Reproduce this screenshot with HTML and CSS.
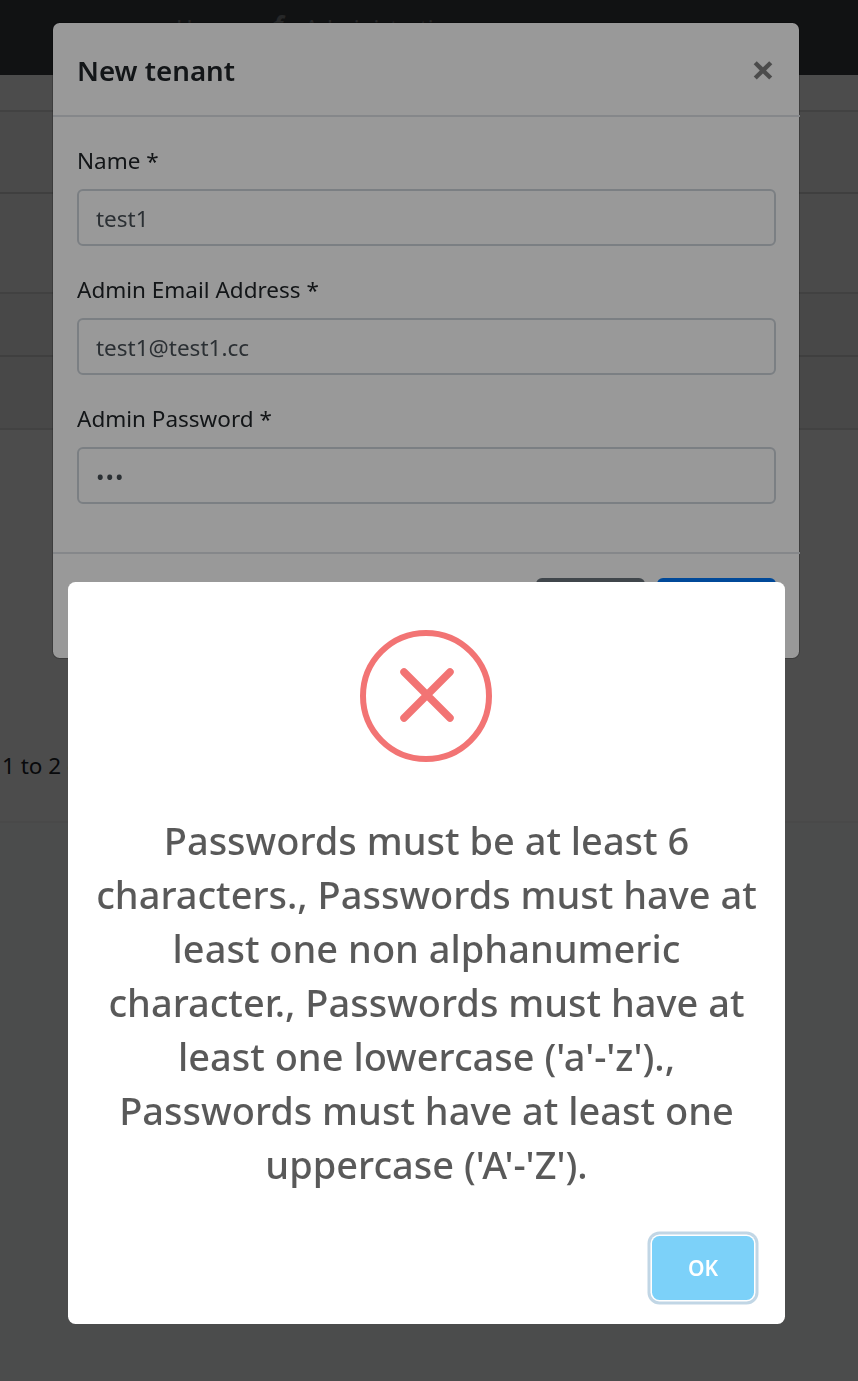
FILE: index.html
```html
<!DOCTYPE html>
<html lang="en">
<head>
<meta charset="utf-8">
<title>Tenants</title>
<link rel="stylesheet" href="styles.css">
</head>
<body>
<div class="page">
  <nav class="navbar"><span class="nav-link">Home</span><span class="nav-icon">f</span><span class="nav-link">Administration</span></nav>
  <main class="content">
    <div class="row row-a"></div>
    <div class="row row-b"></div>
    <div class="row row-c"></div>
    <div class="row row-d"></div>
    <div class="row row-e"></div>
    <div class="pager">1 to 2 of 2</div>
  </main>
</div>
<div class="backdrop"></div>
<div class="modal-layer">
  <section class="modal">
    <header class="modal-header"><h5 class="modal-title">New tenant</h5><span class="close">×</span></header>
    <div class="modal-body">
      <div class="form-group"><label class="label">Name *</label><input class="input" type="text" value="test1"></div>
      <div class="form-group"><label class="label">Admin Email Address *</label><input class="input" type="text" value="test1@test1.cc"></div>
      <div class="form-group"><label class="label">Admin Password *</label><input class="input input-password" type="password" value="abc"></div>
    </div>
    <footer class="modal-footer"><button class="btn btn-cancel">Cancel</button><button class="btn btn-save">Save</button></footer>
  </section>
</div>
<div class="swal-overlay">
  <div class="swal-modal">
    <svg class="swal-icon" viewBox="0 0 132 132" width="132" height="132" aria-hidden="true">
      <circle cx="66" cy="66" r="63" fill="none" stroke="#f27474" stroke-width="6"/>
      <path d="M44 42 L90 88 M90 42 L44 88" fill="none" stroke="#f27474" stroke-width="7.5" stroke-linecap="round"/>
    </svg>
    <div class="swal-text">Passwords must be at least 6 characters., Passwords must have at least one non alphanumeric character., Passwords must have at least one lowercase ('a'-'z')., Passwords must have at least one uppercase ('A'-'Z').</div>
    <div class="swal-footer"><button class="swal-button">OK</button></div>
  </div>
</div>
</body>
</html>
```
FILE: styles.css
```css
* { box-sizing: border-box; }
html, body { margin: 0; height: 100%; overflow: hidden; }
body { background: #fdfffe; font-family: "Noto Sans", "Open Sans", sans-serif; font-size: 22.5px; line-height: 36px; color: #212529; }
.page { display: flex; flex-direction: column; }
.navbar { height: 75px; background: #3a3c42; color: #808286; display: flex; padding: 10px 0 0 176px; }
.nav-icon { font-style: italic; font-weight: 700; font-size: 28px; margin: -2px 22px 0 32px; }
.content { height: 748px; display: flex; flex-direction: column; background: #fff; border-bottom: 2px solid #f4f4f4; }
.row { border-bottom: 2px solid #e6e6e6; }
.row-a { height: 37px; background: #fefefe; border-bottom-color: #dcdcdc; }
.row-b { height: 82px; background: #f8f8f8; border-bottom-color: #d4d4d4; }
.row-c { height: 100px; background: #f9f9f9; border-bottom-color: #dadada; }
.row-d { height: 63px; background: #f2f2f2; border-bottom-color: #d4d4d4; }
.row-e { height: 73px; background: #f0f0f0; border-bottom-color: #dcdcdc; }
.pager { margin-top: 318px; padding-left: 2px; }
.backdrop { position: fixed; inset: 0; background: rgba(0,0,0,.5); }
.modal-layer { position: fixed; inset: 0; padding: 22px 0 0 52px; }
.modal { width: 748px; background: #fff; background-clip: padding-box; border: 1.5px solid rgba(0,0,0,.2); border-radius: 7.5px; display: flex; flex-direction: column; }
.modal-header { height: 93.5px; padding: 25px 24px 24px; display: flex; justify-content: space-between; align-items: flex-start; border-bottom: 2px solid #dee2e6; margin-right: -1px; }
.modal-title { margin: 0; font-size: 27.7px; line-height: 45px; font-weight: 600; }
.close { font-size: 42px; line-height: 45px; font-weight: 700; color: #000; opacity: .5; margin: -2px 1px 0 0; }
.modal-body { padding: 24px 24px 0; height: 437px; border-bottom: 2px solid #dee2e6; margin-right: -1px; }
.form-group { margin-bottom: 24px; }
.label { display: block; margin-bottom: 12px; padding-top: 2px; line-height: 36px; height: 36px; }
.input { display: block; width: 100%; height: 57px; padding: 11px 17px 9px; border: 2px solid #ced4da; border-radius: 6px; background: #fff; color: #495057; font: inherit; }
.input-password { letter-spacing: 1px; }
.modal-footer { padding: 24px 23.5px 23px 24px; display: flex; justify-content: flex-end; gap: 12px; }
.btn { height: 57px; border: 0; border-radius: 6px; color: #fff; font: inherit; }
.btn-cancel { width: 109px; background: #6c757d; }
.btn-save { width: 119px; background: #007bff; }
.swal-overlay { position: fixed; inset: 0; background: rgba(0,0,0,.4); padding: 582px 0 0 68px; }
.swal-modal { width: 717px; height: 742px; background: #fff; border-radius: 7.5px; display: flex; flex-direction: column; align-items: center; padding-top: 48px; }
.swal-icon { display: block; flex: none; margin-right: 1px; }
.swal-text { width: 672px; margin-top: 51px; font-size: 38px; font-weight: 500; line-height: 54px; text-align: center; color: rgba(0,0,0,.65); }
.swal-footer { align-self: stretch; display: flex; justify-content: flex-end; padding: 45px 31px 0 0; }
.swal-button { width: 102px; height: 64px; background: #7cd1f9; color: #fff; border: 0; border-radius: 7.5px; font: 600 21px "Noto Sans", sans-serif; box-shadow: 0 0 0 1.5px #fff, 0 0 0 4.5px rgba(43,114,165,.29); margin: 0; outline: 0; }
```
